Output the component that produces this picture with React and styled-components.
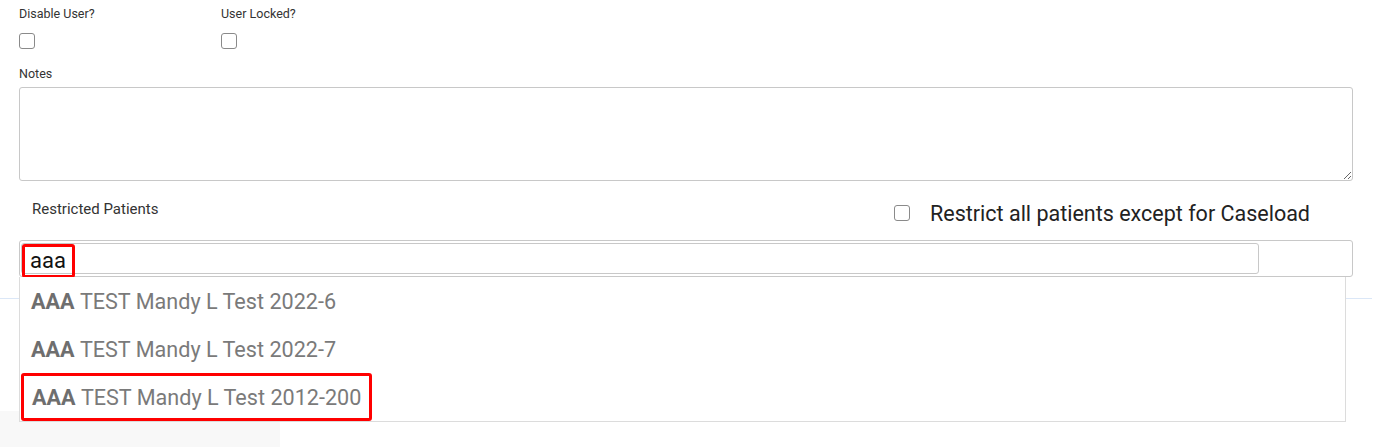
import React from 'react';
import styled, { createGlobalStyle } from 'styled-components';

const GlobalStyle = createGlobalStyle`
  html, body {
    margin: 0;
    padding: 0;
    background: #fff;
    font-family: Roboto, "Liberation Sans", Arial, sans-serif;
    color: #333;
  }
`;

const Page = styled.div`
  position: relative;
  width: 1396px;
  height: 447px;
  overflow: hidden;
  padding: 6px 43px 0 19px;
  box-sizing: border-box;
`;

const FlagRow = styled.div`
  display: grid;
  grid-template-columns: 202px 202px;
`;

const Field = styled.div`
  display: flex;
  flex-direction: column;
`;

const Label = styled.label`
  display: block;
  font-size: ${(p) => p.size || 12.5}px;
  line-height: 16px;
  color: #333;
  padding-left: ${(p) => p.indent || 0}px;
`;

const Check = styled.input.attrs({ type: 'checkbox' })`
  appearance: none;
  margin: 0;
  width: 16px;
  height: 16px;
  border: 1.5px solid #8a8a8a;
  border-radius: 3px;
  background: #fff;
  box-sizing: border-box;
  flex: none;
`;

const CheckSlot = styled.div`
  height: 16px;
  margin-top: 11px;
`;

const NotesLabel = styled(Label)`
  margin-top: 17px;
  margin-bottom: 5px;
`;

const NotesBox = styled.textarea`
  display: block;
  width: 100%;
  height: 94px;
  box-sizing: border-box;
  border: 1.5px solid #c8c8c8;
  border-radius: 3px;
  resize: vertical;
  font-family: inherit;
`;

const RestrictHeader = styled.div`
  display: flex;
  justify-content: space-between;
  align-items: center;
  margin-top: 9px;
  height: 38px;
  padding-right: 43px;
`;

const CaseloadOption = styled.label`
  display: flex;
  align-items: center;
  gap: 20px;
  font-size: 21.5px;
  color: #222;
  padding-top: 8px;
`;

const SearchWrap = styled.div`
  position: relative;
  margin-top: 12px;
`;

const SearchOuter = styled.div`
  height: 37px;
  box-sizing: border-box;
  border: 1.5px solid #c8c8c8;
  border-radius: 3px;
  padding: 2px 93px 2px 1px;
`;

const SearchInner = styled.div`
  height: 100%;
  box-sizing: border-box;
  border: 1.5px solid #c8c8c8;
  border-radius: 3px;
  display: flex;
  align-items: center;
`;

const Highlight = styled.span`
  display: inline-flex;
  align-items: center;
  border: 3px solid #f00;
  border-radius: 3px;
  padding: ${(p) => p.pad || '0 4px'};
  height: ${(p) => p.h || 'auto'};
  box-sizing: border-box;
`;

const Typed = styled(Highlight)`
  font-size: 22px;
  color: #111;
  height: 34px;
  margin-top: 5px;
  padding: 0 6px 2px 5px;
`;

const Menu = styled.ul`
  position: absolute;
  left: 0;
  top: 37px;
  width: 1325px;
  margin: 0;
  padding: 0;
  list-style: none;
  background: #fff;
  border: 1.5px solid #dcdcdc;
  border-top: none;
  z-index: 2;
`;

const MenuItem = styled.li`
  height: 48px;
  display: flex;
  align-items: center;
  padding-left: ${(p) => (p.marked ? 1 : 11)}px;
  font-size: 21.6px;
  color: #7a7a7a;
  & b {
    font-weight: 700;
    color: #6e6e6e;
  }
`;

const Divider = styled.div`
  height: 1px;
  background: #dbe7f7;
  margin: 21px -19px 0;
`;

const Smudge = styled.div`
  width: 280px;
  height: 40px;
  margin: 112px 0 0 -19px;
  background: #f8f8f8;
  border-radius: 0 14px 0 0;
`;

const patients = [
  'TEST Mandy L Test 2022-6',
  'TEST Mandy L Test 2022-7',
  'TEST Mandy L Test 2012-200',
];

export default function App() {
  return (
    <>
      <GlobalStyle />
      <Page>
        <FlagRow>
          <Field>
            <Label>Disable User?</Label>
            <CheckSlot><Check /></CheckSlot>
          </Field>
          <Field>
            <Label>User Locked?</Label>
            <CheckSlot><Check /></CheckSlot>
          </Field>
        </FlagRow>
        <NotesLabel>Notes</NotesLabel>
        <NotesBox />
        <RestrictHeader>
          <Label size={15} indent={13}>Restricted Patients</Label>
          <CaseloadOption>
            <Check />
            Restrict all patients except for Caseload
          </CaseloadOption>
        </RestrictHeader>
        <SearchWrap>
          <SearchOuter>
            <SearchInner>
              <Typed>aaa</Typed>
            </SearchInner>
          </SearchOuter>
          <Menu>
            {patients.map((p, i) => {
              const marked = i === patients.length - 1;
              const content = (
                <>
                  <b>AAA</b>&nbsp;{p}
                </>
              );
              return (
                <MenuItem key={p} marked={marked}>
                  {marked ? (
                    <Highlight pad="0 8px 0 8px" h="48px">{content}</Highlight>
                  ) : (
                    content
                  )}
                </MenuItem>
              );
            })}
          </Menu>
          <Divider />
          <Smudge />
        </SearchWrap>
      </Page>
    </>
  );
}
